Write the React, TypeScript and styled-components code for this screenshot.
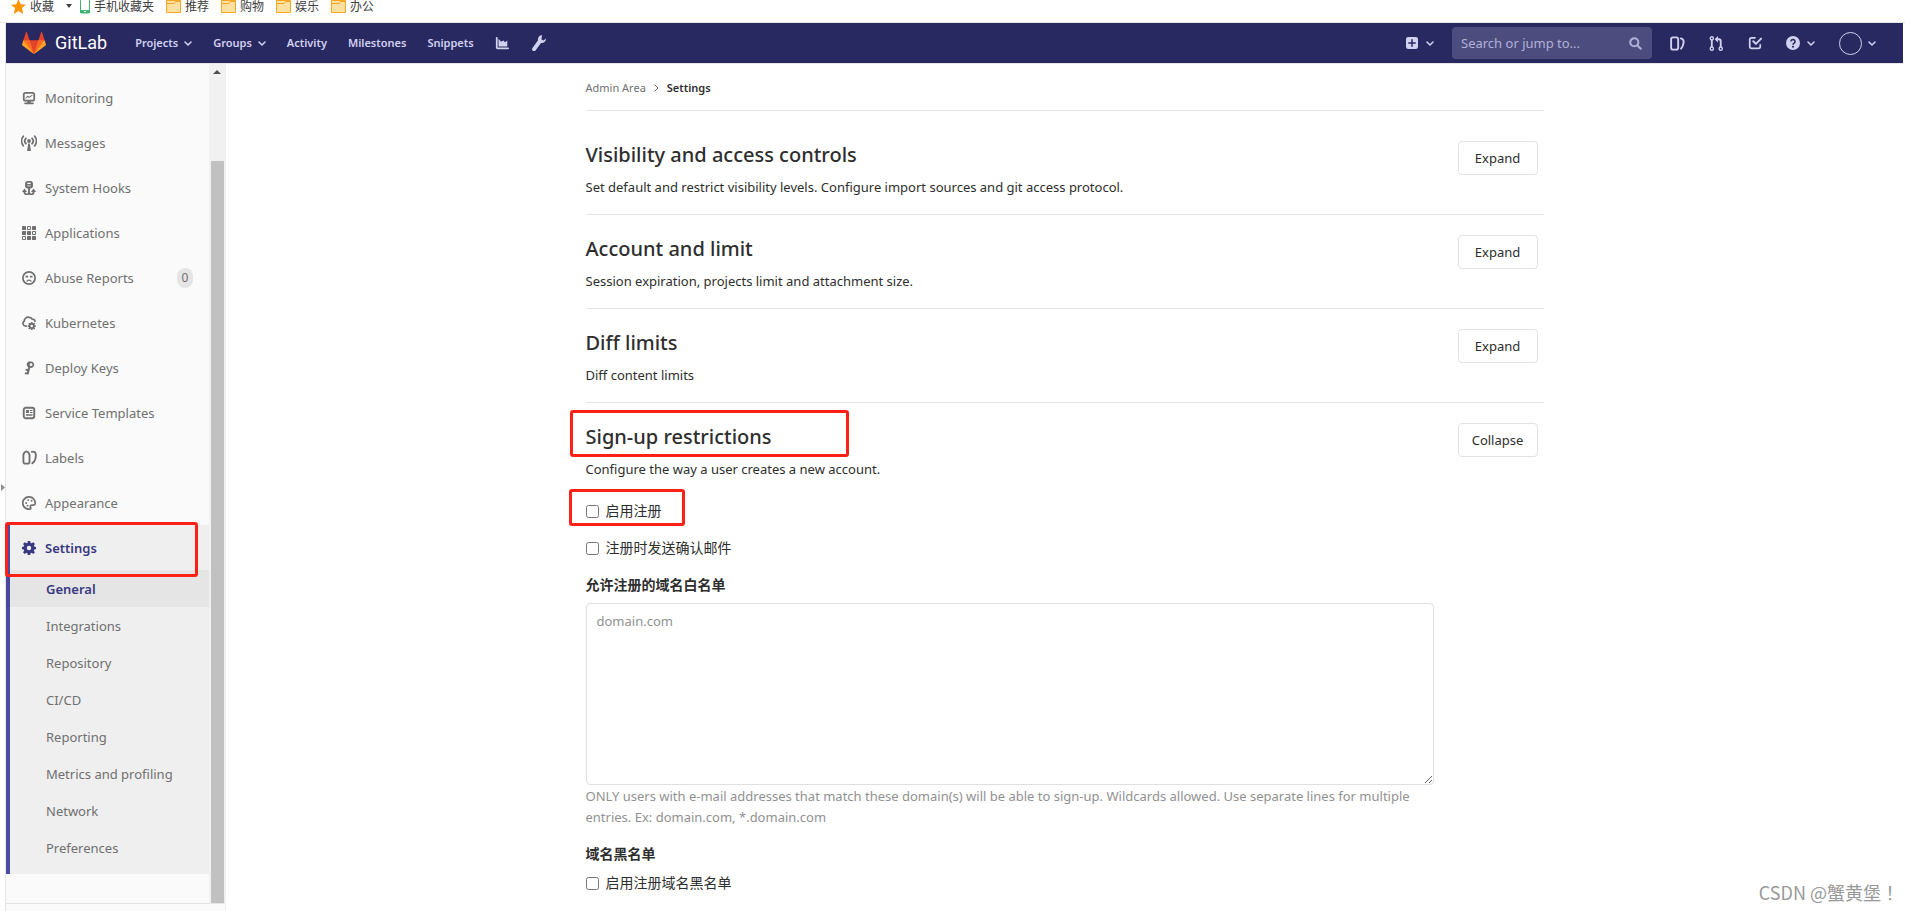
import React from 'react';
import styled, { createGlobalStyle, css } from 'styled-components';

const GlobalStyle = createGlobalStyle`
  *, *::before, *::after { box-sizing: border-box; }
  body {
    margin: 0;
    background: #fff;
    color: #2e2e2e;
    font-family: 'Noto Sans', 'Noto Sans CJK SC', sans-serif;
    font-size: 13px;
    line-height: 20px;
  }
  a { color: inherit; text-decoration: none; }
  button, input, textarea { font: inherit; color: inherit; margin: 0; }
  h4, p, ul, ol { margin: 0; padding: 0; }
  ul, ol { list-style: none; }
  svg { display: block; flex: none; }
`;

const Page = styled.div`
  display: flex;
  flex-direction: column;
  height: 100vh;
  overflow: hidden;
`;

/* ---------- bookmarks strip ---------- */

const Bookmarks = styled.nav`
  display: flex;
  align-items: flex-start;
  gap: 12px;
  flex: none;
  height: 23px;
  padding-left: 11px;
  border-bottom: 1px solid #e5e5e5;
  color: #404040;
  font-family: 'Noto Sans CJK SC', sans-serif;
  font-size: 12px;
  line-height: 12px;
`;

const Bookmark = styled.a`
  display: flex;
  align-items: center;
  gap: 4px;
  height: 12px;
`;

const BookmarkMenu = styled.button`
  display: flex;
  align-items: center;
  width: 6px;
  height: 12px;
  margin-right: -4px;
  padding: 0;
  border: 0;
  background: none;
`;

/* ---------- browser viewport ---------- */

const Viewport = styled.div`
  position: relative;
  display: flex;
  flex-direction: column;
  flex: 1;
  min-height: 0;
  margin: 0 2px 0 5px;
  border-left: 1px solid #e5e5e5;
`;

const DrawerHandle = styled.svg`
  position: absolute;
  left: -5px;
  top: 461px;
`;

const Navbar = styled.header`
  display: flex;
  align-items: center;
  justify-content: space-between;
  flex: none;
  height: 40px;
  padding: 0 27px 0 16px;
  background: #292961;
  color: #d1d1f0;
`;

const NavGroup = styled.div`
  display: flex;
  align-items: center;
`;

const Brand = styled.a`
  display: flex;
  align-items: center;
  gap: 9px;
  margin-right: 28px;
  color: #fff;
  font-family: Roboto, sans-serif;
  font-size: 18px;
`;

const NavLinks = styled.div`
  display: flex;
  align-items: center;
  gap: 21px;
  font-size: 11px;
  font-weight: 600;
`;

const NavLink = styled.a`
  display: flex;
  align-items: center;
  gap: 6px;
`;

const NavButton = styled.button<{ $gap?: number }>`
  display: flex;
  align-items: center;
  gap: ${({ $gap = 6 }) => $gap}px;
  padding: 0;
  border: 0;
  background: none;
  color: #d1d1f0;
`;

const SearchBox = styled.label`
  display: flex;
  align-items: center;
  width: 200px;
  height: 32px;
  margin: 0 18px;
  padding: 0 10px 0 9px;
  border-radius: 4px;
  background: #4c4c7f;
  color: #b1b1d8;

  input {
    flex: 1;
    min-width: 0;
    padding: 0;
    border: 0;
    outline: 0;
    background: none;
  }
  input::placeholder { color: #b1b1d8; opacity: 1; }
`;

const NavIcons = styled.div`
  display: flex;
  align-items: center;
  gap: 24px;
`;

const Avatar = styled.span`
  width: 23px;
  height: 23px;
  border: 1px solid #d1d1f0;
  border-radius: 50%;
`;

const Body = styled.div`
  display: flex;
  flex: 1;
  min-height: 0;
  border-top: 1px solid #e5e5e5;
`;

/* ---------- sidebar ---------- */

const Sidebar = styled.aside`
  display: flex;
  flex-direction: column;
  flex: none;
  width: 220px;
  background: #fafafa;
  border-right: 1px solid #f0f0f0;
`;

const SidebarScroller = styled.div`
  display: flex;
  flex: 1;
  min-height: 0;
`;

const SidebarList = styled.ul`
  flex: 1;
  padding-top: 11px;
  color: #707070;
`;

const SidebarItem = styled.li<{ $active?: boolean }>`
  ${({ $active }) =>
    $active &&
    css`
      position: relative;
      padding-bottom: 8px;
      background: #efefef;
      box-shadow: inset 4px 0 0 #4b4ba3;
    `}
`;

const SidebarLink = styled.a<{ $active?: boolean }>`
  display: flex;
  align-items: center;
  gap: 8px;
  height: 45px;
  padding: 0 16px 0 15px;
  ${({ $active }) => $active && 'color: #393982; font-weight: 600;'}
`;

const CountBadge = styled.span`
  margin-left: auto;
  width: 16px;
  border-radius: 10px;
  background: #e5e5e5;
  font-size: 12px;
  text-align: center;
`;

const SubLink = styled.a<{ $active?: boolean }>`
  display: flex;
  align-items: center;
  height: 37px;
  padding-left: 40px;
  ${({ $active }) =>
    $active && 'background: rgba(0, 0, 0, 0.04); color: #393982; font-weight: 600;'}
`;

const ScrollTrack = styled.div`
  display: flex;
  flex-direction: column;
  align-items: center;
  width: 16px;
  padding-top: 6px;
  background: #f1f1f1;
`;

const ScrollThumb = styled.div`
  flex: 1;
  width: 13px;
  margin-top: 87px;
  background: #c1c1c1;
`;

const SidebarFooter = styled.div`
  flex: none;
  height: 8px;
  border-top: 1px solid #e5e5e5;
`;

/* ---------- content ---------- */

const Main = styled.main`
  flex: 1;
  min-width: 0;
  overflow: hidden;
`;

const Container = styled.div`
  max-width: 990px;
  margin: 0 auto;
  padding: 0 16px;
`;

const Breadcrumbs = styled.ol`
  display: flex;
  align-items: center;
  gap: 8px;
  height: 47px;
  margin-bottom: 10px;
  padding-top: 2px;
  border-bottom: 1px solid #e5e5e5;
  color: #707070;
  font-size: 11px;

  strong { color: #2e2e2e; font-weight: 600; }
`;

const Section = styled.section`
  padding: 20px 0 17px;
  border-bottom: 1px solid #e5e5e5;
  &:last-child { border-bottom: 0; }
`;

const SectionHead = styled.div`
  display: flex;
  align-items: flex-start;
  justify-content: space-between;
  padding-right: 6px;
`;

const SectionTitle = styled.h4`
  position: relative;
  margin-bottom: 8px;
  font-size: 20px;
  font-weight: 500;
  line-height: 28px;
`;

const ToggleButton = styled.button`
  width: 80px;
  height: 34px;
  padding: 0;
  border: 1px solid #e3e3e3;
  border-radius: 4px;
  background: #fff;
`;

const Form = styled.form`
  display: flex;
  flex-direction: column;
  align-items: flex-start;
  max-width: 848px;
  padding-top: 22px;
`;

const CheckRow = styled.label`
  position: relative;
  display: flex;
  align-items: center;
  gap: 7px;
  margin-bottom: 17px;
  font-size: 14px;

  input { width: 13px; height: 13px; }
`;

const FieldLabel = styled.label`
  margin-bottom: 8px;
  font-size: 14px;
  font-weight: 700;
`;

const GroupLabel = styled(FieldLabel).attrs({ as: 'span' })`
  margin: 16px 0 9px;
`;

const DomainArea = styled.textarea`
  display: block;
  width: 100%;
  height: 182px;
  padding: 7px 10px;
  border: 1px solid #dfdfdf;
  border-radius: 4px;
  outline: 0;
  background: #fff;
  resize: both;
  &::placeholder { color: #919191; opacity: 1; }
`;

const Hint = styled.p`
  margin-top: 1px;
  color: #919191;
  line-height: 21px;
`;

/* ---------- annotations over the page ---------- */

const Highlight = styled.span<{ $left: number; $top: number; $width: number; $height: number }>`
  position: absolute;
  left: ${({ $left }) => $left}px;
  top: ${({ $top }) => $top}px;
  width: ${({ $width }) => $width}px;
  height: ${({ $height }) => $height}px;
  border: 3px solid #ff2116;
  border-radius: 3px;
  pointer-events: none;
  z-index: 2;
`;

const Watermark = styled.div`
  position: absolute;
  right: 4px;
  bottom: 7px;
  color: #999;
  font-family: 'Noto Sans CJK TC', sans-serif;
  font-size: 18px;
  line-height: 24px;
`;

/* ---------- icons ---------- */

const Svg = ({ size = 16, children }: { size?: number; children: React.ReactNode }) => (
  <svg width={size} height={size} viewBox="0 0 16 16" fill="currentColor" aria-hidden="true">
    {children}
  </svg>
);

const Stroke = ({ d, w = 2 }: { d: string; w?: number }) => (
  <path d={d} fill="none" stroke="currentColor" strokeWidth={w} strokeLinecap="round" strokeLinejoin="round" />
);

const Chevron = () => (
  <svg width="8" height="8" viewBox="0 0 8 8" aria-hidden="true">
    <Stroke d="M1 3l3 3 3-3" w={1.5} />
  </svg>
);

const Tanuki = () => (
  <svg width="24" height="24" viewBox="0 0 36 36" aria-hidden="true">
    <path fill="#e24329" d="M2 14l9.38 9v-9l-4-12.28c-.205-.632-1.176-.632-1.38 0z" />
    <path fill="#e24329" d="M34 14l-9.38 9v-9l4-12.28c.205-.632 1.176-.632 1.38 0z" />
    <path fill="#e24329" d="M18 34.38L3 14h30z" />
    <path fill="#fc6d26" d="M18 34.38L11.38 14H2l4 11z" />
    <path fill="#fc6d26" d="M18 34.38L24.62 14H34l-4 11z" />
    <path fill="#fca326" d="M2 14L.1 20.16c-.18.565 0 1.2.5 1.56l17.42 12.66z" />
    <path fill="#fca326" d="M34 14l1.9 6.16c.18.565 0 1.2-.5 1.56L18 34.38z" />
  </svg>
);

const Folder = () => (
  <svg width="15" height="13" viewBox="0 0 15 13" aria-hidden="true">
    <path d="M.5.500h14v12H.5z" fill="#ffe0a3" stroke="#f5a623" />
    <path d="M1 3.500h7l1.500-2H14" fill="none" stroke="#f5a623" />
  </svg>
);

const Star = () => (
  <svg width="15" height="15" viewBox="0 0 16 16" aria-hidden="true">
    <path fill="#ff9500" d="M8 0l2.300 5.500 5.700.5-4.300 3.700L13 16l-5-3.300L3 16l1.300-6.300L0 6l5.700-.5z" />
  </svg>
);

const Phone = () => (
  <svg width="10" height="15" viewBox="0 0 10 15" aria-hidden="true">
    <rect x=".5" y=".5" width="9" height="13.500" rx="1" fill="#fff" stroke="#3cb371" />
    <path fill="#3cb371" d="M0 11h10v3H0z" />
    <path fill="#fff" d="M4 12h2v1H4z" />
  </svg>
);

const Monitor = () => (
  <Svg size={14}>
    <path
      fillRule="evenodd"
      d="M4 1h8a3 3 0 0 1 3 3v5a3 3 0 0 1-3 3H4a3 3 0 0 1-3-3V4a3 3 0 0 1 3-3zm0 2a1 1 0 0 0-1 1v5a1 1 0 0 0 1 1h8a1 1 0 0 0 1-1V4a1 1 0 0 0-1-1z"
    />
    <path d="M6 11h4v2h2.500a1 1 0 0 1 0 2h-9a1 1 0 0 1 0-2H6z" />
    <Stroke d="M4.500 8l2-2 1.500 1.300L11.500 5" w={1.200} />
  </Svg>
);

const Messages = () => (
  <Svg size={16}>
    <circle cx="8" cy="6" r="1.900" />
    <path d="M7.200 8.500h1.600L10 16H6z" />
    <Stroke d="M4.900 3.300a4 4 0 0 0 0 5.400M11.100 3.300a4 4 0 0 1 0 5.400M2.300 1.300a7.500 7.500 0 0 0 0 9.400M13.700 1.300a7.500 7.500 0 0 1 0 9.400" w={1.800} />
  </Svg>
);

const Hook = () => (
  <Svg size={14}>
    <path
      fillRule="evenodd"
      d="M6.500 0h3A3 3 0 0 1 12.500 3v2.500a3 3 0 0 1-3 3h-3a3 3 0 0 1-3-3V3a3 3 0 0 1 3-3zM6 2.500v1h4v-1a.6.6 0 0 0-.6-.6H6.600a.6.600 0 0 0-.6.600zM6 5v1h4V5z"
    />
    <Stroke d="M8 8v4.500a2.400 2.400 0 0 1-5.200.3V11M8 12.500a2.400 2.400 0 0 0 5.200.3V11" w={2.200} />
    <path d="M0 12.500L2.800 8.500l3 4zM10.200 12.500l3-4 2.800 4z" />
  </Svg>
);

const Apps = () => {
  const hollow = [1, 5, 6];
  return (
    <Svg size={14}>
      {Array.from({ length: 9 }, (_, i) => {
        const x = (i % 3) * 5.7;
        const y = Math.floor(i / 3) * 5.7;
        return hollow.includes(i) ? (
          <rect key={i} x={x + 0.6} y={y + 0.6} width="3.400" height="3.400" rx=".6" fill="none" stroke="currentColor" strokeWidth="1.200" />
        ) : (
          <rect key={i} x={x} y={y} width="4.600" height="4.600" rx="1" />
        );
      })}
    </Svg>
  );
};

const Frown = () => (
  <Svg size={14}>
    <circle cx="8" cy="8" r="7" fill="none" stroke="currentColor" strokeWidth="2" />
    <path d="M4 5.500h3v2H4zM9 5.500h3v2H9z" />
    <Stroke d="M5.700 11.500a3 3 0 0 1 4.600 0" w={1.500} />
  </Svg>
);

const Gear = () => (
  <path
    fillRule="evenodd"
    d="M6.600 0h2.800l.4 2.200 1.200.5L12.900 1.400l1.900 1.900-1.300 1.900.5 1.200 2 .4v2.600l-2 .4-.5 1.200 1.300 1.900-1.900 1.900-1.900-1.300-1.200.5L9.400 16H6.600l-.4-2-1.200-.5-1.900 1.300-1.900-1.900L2.500 11 2 9.800 0 9.400V6.800l2-.4.5-1.200L1.200 3.300l1.900-1.900L5 2.700l1.200-.5zM8 5.500a2.500 2.500 0 1 0 0 5 2.500 2.500 0 0 0 0-5z"
  />
);

const CloudGear = () => (
  <Svg size={14}>
    <Stroke d="M5 11.500H4A3 3 0 0 1 2.500 6 4.500 4.500 0 0 1 8 1.500C10 1.500 11 2.500 11.500 3.500c1.800-.1 3.300 1 3.300 2.500" />
    <g transform="translate(6.500 6.800) scale(.58)">
      <Gear />
    </g>
  </Svg>
);

const KeyIcon = () => (
  <Svg size={14}>
    <path
      fillRule="evenodd"
      d="M10 .5a3.700 3.700 0 1 1-.6 7.300L7.500 15.500 3 15l.6-2.200 1.900.3.500-1.800-2.200-.4.600-2.100 2.200.4.500-2A3.700 3.700 0 0 1 10 .5zm.4 2.100a1.600 1.600 0 1 0 0 3.200 1.600 1.600 0 0 0 0-3.200z"
    />
  </Svg>
);

const Template = () => (
  <Svg size={14}>
    <rect x="2" y="2" width="12" height="12" rx="2.200" fill="none" stroke="currentColor" strokeWidth="2.200" />
    <path d="M4.500 4.500h3.500v3.500H4.500zM9 4.500h3v1.300H9zM9 6.800h3v1.200H9zM4.500 9.500H12v1.500H4.500z" />
  </Svg>
);

const Labels = () => (
  <Svg size={15}>
    <path
      d="M1.500 5Q2.500 1.800 4.700 1.500 7 1.800 8 5v7.500a2 2 0 0 1-2 2H3.500a2 2 0 0 1-2-2z"
      fill="none"
      stroke="currentColor"
      strokeWidth="2"
    />
    <Stroke d="M10.500 2c2.500-1 4 .5 4.200 3 .2 3-1 7-3.700 9.200" />
  </Svg>
);

const Palette = () => (
  <Svg size={14}>
    <path
      d="M8 1a7 7 0 1 0 1.500 13.800c1.500-.5-1-2.500.5-4 1.300-1.200 4.500.700 5-1.800A7 7 0 0 0 8 1z"
      fill="none"
      stroke="currentColor"
      strokeWidth="2"
    />
    <circle cx="4.700" cy="8" r="1.100" />
    <circle cx="7" cy="4.700" r="1.100" />
    <circle cx="11" cy="5.500" r="1.100" />
    <circle cx="6.300" cy="11" r="1.100" />
  </Svg>
);

const SettingsIcon = () => (
  <Svg size={14}>
    <Gear />
  </Svg>
);

const ChartIcon = () => (
  <Svg size={14}>
    <path d="M1 2a1 1 0 0 1 2 0v11h12a1 1 0 0 1 0 2H3a2 2 0 0 1-2-2z" />
    <path d="M4 12V3l3 3.500L9.500 5l2 2L14 5v7z" />
  </Svg>
);

const Wrench = () => (
  <Svg size={16}>
    <path d="M12 0C9.300.3 7.500 2.500 8 5.200L2.500 13a1.900 1.900 0 0 0 3 2.400L11 8c2.700.4 5-1.400 5-4.500L13.500 5.500l-2-1z" />
  </Svg>
);

const PlusSquare = () => (
  <Svg size={12}>
    <path
      fillRule="evenodd"
      d="M3 0h10a3 3 0 0 1 3 3v10a3 3 0 0 1-3 3H3a3 3 0 0 1-3-3V3a3 3 0 0 1 3-3zm4 3v4H3v2h4v4h2V9h4V7H9V3z"
    />
  </Svg>
);

const SearchIcon = () => (
  <Svg size={13}>
    <circle cx="6.500" cy="6.500" r="5" fill="none" stroke="currentColor" strokeWidth="2.500" />
    <Stroke d="M11 11l3.500 3.500" w={2.500} />
  </Svg>
);

const IssuesIcon = () => (
  <Svg size={15}>
    <rect x="1.200" y="1.500" width="7.500" height="13" rx="2" fill="none" stroke="currentColor" strokeWidth="2" />
    <Stroke d="M11.500 2.500c2.500.5 3.300 2 3 4.500s-1 4.500-2.700 6.500" />
  </Svg>
);

const MergeIcon = () => (
  <Svg size={15}>
    <g fill="none" stroke="currentColor" strokeWidth="1.500">
      <circle cx="3" cy="2.500" r="1.700" />
      <circle cx="3" cy="13.500" r="1.700" />
      <circle cx="12.500" cy="13.500" r="1.700" />
      <path d="M3 4v8M12.500 12V5.500a2 2 0 0 0-2-2H8" strokeWidth="2" />
    </g>
    <path d="M9.500 0v7L6 3.500z" />
  </Svg>
);

const TodoIcon = () => (
  <Svg size={14}>
    <Stroke d="M8 2H4a2 2 0 0 0-2 2v8a2 2 0 0 0 2 2h8a2 2 0 0 0 2-2v-2" />
    <Stroke d="M6 6l3 3 6-6" w={2.200} />
  </Svg>
);

const HelpIcon = () => (
  <Svg size={14}>
    <circle cx="8" cy="8" r="8" />
    <path
      d="M5.700 6.200a2.300 2.300 0 1 1 3.500 2C8.300 8.700 8 9 8 10"
      fill="none"
      stroke="#292961"
      strokeWidth="1.800"
    />
    <circle cx="8" cy="12.300" r="1.200" fill="#292961" />
  </Svg>
);

/* ---------- data ---------- */

const sidebarItems = [
  { label: 'Monitoring', icon: <Monitor /> },
  { label: 'Messages', icon: <Messages /> },
  { label: 'System Hooks', icon: <Hook /> },
  { label: 'Applications', icon: <Apps /> },
  { label: 'Abuse Reports', icon: <Frown />, count: 0 },
  { label: 'Kubernetes', icon: <CloudGear /> },
  { label: 'Deploy Keys', icon: <KeyIcon /> },
  { label: 'Service Templates', icon: <Template /> },
  { label: 'Labels', icon: <Labels /> },
  { label: 'Appearance', icon: <Palette /> },
];

const IconSlot = styled.span`
  display: flex;
  justify-content: center;
  width: 16px;
`;

const settingsPages = [
  'General',
  'Integrations',
  'Repository',
  'CI/CD',
  'Reporting',
  'Metrics and profiling',
  'Network',
  'Preferences',
];

const collapsedSections = [
  {
    title: 'Visibility and access controls',
    text: 'Set default and restrict visibility levels. Configure import sources and git access protocol.',
  },
  { title: 'Account and limit', text: 'Session expiration, projects limit and attachment size.' },
  { title: 'Diff limits', text: 'Diff content limits' },
];

/* ---------- page ---------- */

export default function App() {
  return (
    <Page>
      <GlobalStyle />
      <Bookmarks>
        <Bookmark href="#">
          <Star />
          收藏
        </Bookmark>
        <BookmarkMenu type="button" aria-label="More bookmarks">
          <svg width="6" height="4" viewBox="0 0 6 4" aria-hidden="true">
            <path fill="#404040" d="M0 0h6L3 4z" />
          </svg>
        </BookmarkMenu>
        <Bookmark href="#">
          <Phone />
          手机收藏夹
        </Bookmark>
        {['推荐', '购物', '娱乐', '办公'].map((name) => (
          <Bookmark href="#" key={name}>
            <Folder />
            {name}
          </Bookmark>
        ))}
      </Bookmarks>

      <Viewport>
        <DrawerHandle width="4" height="7" viewBox="0 0 4 7" aria-hidden="true">
          <path fill="#8c8c8c" d="M0 0l4 3.500L0 7z" />
        </DrawerHandle>

        <Navbar>
          <NavGroup>
            <Brand href="#">
              <Tanuki />
              GitLab
            </Brand>
            <NavLinks>
              <NavLink href="#">
                Projects <Chevron />
              </NavLink>
              <NavLink href="#">
                Groups <Chevron />
              </NavLink>
              <NavLink href="#">Activity</NavLink>
              <NavLink href="#">Milestones</NavLink>
              <NavLink href="#">Snippets</NavLink>
              <NavLink href="#" aria-label="Instance statistics">
                <ChartIcon />
              </NavLink>
              <NavLink href="#" aria-label="Admin area">
                <Wrench />
              </NavLink>
            </NavLinks>
          </NavGroup>
          <NavGroup>
            <NavButton type="button" $gap={8} aria-label="New">
              <PlusSquare />
              <Chevron />
            </NavButton>
            <SearchBox>
              <input type="text" placeholder="Search or jump to..." aria-label="Search or jump to" />
              <SearchIcon />
            </SearchBox>
            <NavIcons>
              <NavLink href="#" aria-label="Issues">
                <IssuesIcon />
              </NavLink>
              <NavLink href="#" aria-label="Merge requests">
                <MergeIcon />
              </NavLink>
              <NavLink href="#" aria-label="To-dos">
                <TodoIcon />
              </NavLink>
              <NavButton type="button" $gap={7} aria-label="Help">
                <HelpIcon />
                <Chevron />
              </NavButton>
              <NavButton type="button" aria-label="Account">
                <Avatar />
                <Chevron />
              </NavButton>
            </NavIcons>
          </NavGroup>
        </Navbar>

        <Body>
          <Sidebar>
            <SidebarScroller>
              <SidebarList>
                {sidebarItems.map(({ label, icon, count }) => (
                  <SidebarItem key={label}>
                    <SidebarLink href="#">
                      <IconSlot>{icon}</IconSlot>
                      {label}
                      {count !== undefined && <CountBadge>{count}</CountBadge>}
                    </SidebarLink>
                  </SidebarItem>
                ))}
                <SidebarItem $active>
                  <Highlight $left={-1} $top={-3} $width={193} $height={55} />
                  <SidebarLink href="#" $active>
                    <IconSlot>
                      <SettingsIcon />
                    </IconSlot>
                    Settings
                  </SidebarLink>
                  <ul>
                    {settingsPages.map((name, i) => (
                      <li key={name}>
                        <SubLink href="#" $active={i === 0}>
                          {name}
                        </SubLink>
                      </li>
                    ))}
                  </ul>
                </SidebarItem>
              </SidebarList>
              <ScrollTrack>
                <svg width="8" height="4" viewBox="0 0 8 4" aria-hidden="true">
                  <path fill="#505050" d="M4 0l4 4H0z" />
                </svg>
                <ScrollThumb />
              </ScrollTrack>
            </SidebarScroller>
            <SidebarFooter />
          </Sidebar>

          <Main>
            <Container>
              <Breadcrumbs>
                <li>
                  <a href="#">Admin Area</a>
                </li>
                <svg width="5" height="8" viewBox="0 0 5 8" aria-hidden="true">
                  <Stroke d="M1 1l3 3-3 3" w={1} />
                </svg>
                <li>
                  <strong>Settings</strong>
                </li>
              </Breadcrumbs>

              {collapsedSections.map(({ title, text }) => (
                <Section key={title}>
                  <SectionHead>
                    <div>
                      <SectionTitle>{title}</SectionTitle>
                      <p>{text}</p>
                    </div>
                    <ToggleButton type="button">Expand</ToggleButton>
                  </SectionHead>
                </Section>
              ))}

              <Section>
                <SectionHead>
                  <div>
                    <SectionTitle>
                      Sign-up restrictions
                      <Highlight $left={-16} $top={-13} $width={279} $height={47} />
                    </SectionTitle>
                    <p>Configure the way a user creates a new account.</p>
                  </div>
                  <ToggleButton type="button">Collapse</ToggleButton>
                </SectionHead>
                <Form>
                  <CheckRow>
                    <input type="checkbox" />
                    启用注册
                    <Highlight $left={-17} $top={-12} $width={116} $height={37} />
                  </CheckRow>
                  <CheckRow>
                    <input type="checkbox" />
                    注册时发送确认邮件
                  </CheckRow>
                  <FieldLabel htmlFor="whitelist">允许注册的域名白名单</FieldLabel>
                  <DomainArea id="whitelist" placeholder="domain.com" />
                  <Hint>
                    ONLY users with e-mail addresses that match these domain(s) will be able to sign-up.
                    Wildcards allowed. Use separate lines for multiple entries. Ex: domain.com, *.domain.com
                  </Hint>
                  <GroupLabel>域名黑名单</GroupLabel>
                  <CheckRow>
                    <input type="checkbox" />
                    启用注册域名黑名单
                  </CheckRow>
                </Form>
              </Section>
            </Container>
          </Main>
        </Body>
        <Watermark>CSDN @蟹黄堡！</Watermark>
      </Viewport>
    </Page>
  );
}
